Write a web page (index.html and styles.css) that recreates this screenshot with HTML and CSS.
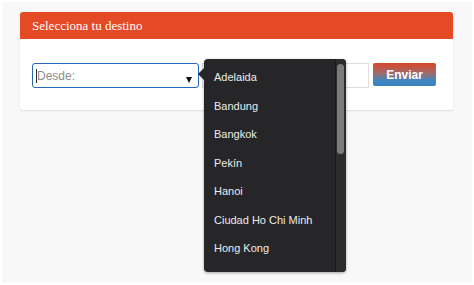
FILE: index.html
```html
<!DOCTYPE html>
<html lang="es">
<head>
<meta charset="utf-8">
<link rel="stylesheet" href="styles.css">
</head>
<body>
<div class="page">
  <section class="card">
    <header class="card-head">Selecciona tu destino</header>
    <div class="card-body">
      <div class="field from">
        <span class="caret"></span><span class="placeholder">Desde:</span>
        <span class="arrow"></span>
        <div class="menu">
          <ul class="options">
            <li>Adelaida</li>
            <li>Bandung</li>
            <li>Bangkok</li>
            <li>Pekín</li>
            <li>Hanoi</li>
            <li>Ciudad Ho Chi Minh</li>
            <li>Hong Kong</li>
          </ul>
          <div class="scroll"><div class="thumb"></div></div>
        </div>
      </div>
      <div class="field to"></div>
      <button class="send">Enviar</button>
    </div>
  </section>
</div>
</body>
</html>
```
FILE: styles.css
```css
html { background: #ffffff; }
body {
  margin: 2px;
  background: #f8f8f8;
  height: 281px;
  font-family: "Helvetica Neue", "Liberation Sans", Arial, sans-serif;
}
.page {
  padding: 10px 19px 0 18px;
}
.card {
  background: #ffffff;
  border-radius: 3px;
  box-shadow: 0 1px 2px rgba(0,0,0,0.12);
  height: 98px;
}
.card-head {
  background: #e34a25;
  color: #ffffff;
  font-family: "Liberation Serif", "Times New Roman", serif;
  font-size: 13px;
  height: 27px;
  line-height: 27px;
  padding-left: 12px;
  border-radius: 3px 3px 0 0;
}
.card-body {
  display: flex;
  align-items: flex-start;
  padding: 24px 0 0 12px;
}
.field {
  height: 25px;
  box-sizing: border-box;
  background: #fff;
}
.from {
  position: relative;
  width: 167px;
  border: 1.5px solid #2466b8;
  border-radius: 3px;
  display: flex;
  align-items: center;
  padding-left: 3px;
}
.caret {
  width: 1px;
  height: 14px;
  background: #333;
}
.placeholder {
  color: #8c8c8c;
  font-size: 12px;
}
.arrow {
  position: absolute;
  right: 6px;
  top: 13px;
  width: 0;
  height: 0;
  border-left: 3.5px solid transparent;
  border-right: 3.5px solid transparent;
  border-top: 6px solid #111;
}
.to {
  width: 167px;
  margin-left: 3px;
  border: 1px solid #dedede;
}
.send {
  margin-left: 4px;
  width: 63px;
  height: 23px;
  border: none;
  border-radius: 2px;
  background: linear-gradient(to bottom, #d8472a 0%, #a06a6a 45%, #3f86c2 75%, #3a80c0 100%);
  color: #ffffff;
  font-weight: bold;
  font-size: 12px;
  font-family: "Helvetica Neue", "Liberation Sans", Arial, sans-serif;
  padding: 0;
}
.menu {
  position: absolute;
  left: 171px;
  top: -5px;
  width: 142px;
  height: 213px;
  background: #262629;
  border-radius: 4px;
  box-shadow: 0 1px 3px rgba(0,0,0,0.35);
  display: flex;
  z-index: 2;
}
.menu::before {
  content: "";
  position: absolute;
  left: -6px;
  top: 9px;
  border-top: 6px solid transparent;
  border-bottom: 6px solid transparent;
  border-right: 6px solid #262629;
}
.options {
  list-style: none;
  margin: 0;
  padding: 10px 0 0 10px;
  flex: 1;
  overflow: hidden;
}
.options li {
  color: #ececec;
  font-size: 11px;
  height: 28.5px;
  line-height: 16px;
}
.scroll {
  width: 11px;
  border-left: 1px solid #1b1b1d;
  background: #2c2c2f;
  border-radius: 0 4px 4px 0;
  padding: 5px 0 0 1px;
  box-sizing: border-box;
}
.thumb {
  width: 7px;
  height: 90px;
  border-radius: 4px;
  background: #7b7b7e;
}
```
